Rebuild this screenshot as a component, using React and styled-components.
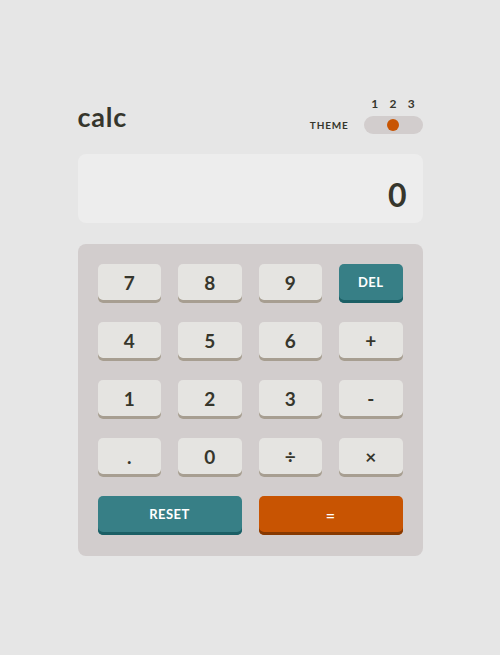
import React, { useState } from 'react';
import styled, { createGlobalStyle, css } from 'styled-components';

const GlobalStyle = createGlobalStyle`
  html, body {
    margin: 0;
    padding: 0;
    background: #e6e6e6;
    font-family: "Lato", "Open Sans", sans-serif;
  }
`;

const Page = styled.div`
  width: 500px;
  min-height: 655px;
  box-sizing: border-box;
  padding-top: 97px;
  display: flex;
  justify-content: center;
`;

const Calculator = styled.div`
  width: 345px;
`;

const Header = styled.header`
  display: flex;
  justify-content: space-between;
  align-items: flex-end;
  color: #36362c;
`;

const Title = styled.h1`
  margin: 0 0 1px;
  font-size: 27px;
  font-weight: 700;
  letter-spacing: 0.8px;
  line-height: 32px;
`;

const Theme = styled.div`
  display: flex;
  align-items: flex-end;
  gap: 15px;
`;

const ThemeLabel = styled.span`
  font-size: 10px;
  font-weight: 700;
  letter-spacing: 0.8px;
  line-height: 18px;
`;

const ToggleWrap = styled.div`
  display: flex;
  flex-direction: column;
  width: 59px;
`;

const Numbers = styled.div`
  display: grid;
  grid-template-columns: repeat(3, 1fr);
  font-size: 12px;
  font-weight: 700;
  text-align: center;
  line-height: 14px;
  margin-bottom: 5px;
  padding: 0 2px;
`;

const Track = styled.div`
  height: 18px;
  border-radius: 9px;
  background: #d2cdcd;
  display: grid;
  grid-template-columns: repeat(3, 1fr);
  align-items: center;
  padding: 0 2px;
  cursor: pointer;
`;

const Knob = styled.span`
  justify-self: center;
  width: 12px;
  height: 12px;
  border-radius: 50%;
  background: ${p => (p.active ? '#c85402' : 'transparent')};
`;

const Screen = styled.div`
  margin-top: 20px;
  height: 69px;
  border-radius: 8px;
  background: #ededed;
  display: flex;
  align-items: center;
  justify-content: flex-end;
  padding: 12px 16px 0;
  box-sizing: border-box;
  color: #36362c;
  font-size: 32px;
  font-weight: 700;
`;

const Keypad = styled.div`
  margin-top: 21px;
  background: #d2cdcd;
  border-radius: 8px;
  padding: 20px 20px 21px;
  display: grid;
  grid-template-columns: repeat(4, 1fr);
  column-gap: 17px;
  row-gap: 19px;
`;

const Key = styled.button`
  height: 39px;
  border: none;
  border-radius: 5px;
  font-family: inherit;
  font-weight: 700;
  font-size: 19px;
  color: #36362c;
  background: #e5e4e1;
  box-shadow: inset 0 -3px 0 #a79e91;
  padding: 0 0 3px;
  cursor: pointer;
  ${p =>
    p.wide &&
    css`
      grid-column: span 2;
    `}
  ${p =>
    p.variant === 'dark' &&
    css`
      background: #377f86;
      box-shadow: inset 0 -3px 0 #1b5f65;
      color: #ffffff;
      font-size: 13px;
      letter-spacing: 0.5px;
    `}
  ${p =>
    p.variant === 'accent' &&
    css`
      background: #c85402;
      box-shadow: inset 0 -3px 0 #873901;
      color: #ffffff;
      font-size: 16px;
    `}
`;

const keys = [
  { label: '7' }, { label: '8' }, { label: '9' }, { label: 'DEL', variant: 'dark' },
  { label: '4' }, { label: '5' }, { label: '6' }, { label: '+' },
  { label: '1' }, { label: '2' }, { label: '3' }, { label: '-' },
  { label: '.' }, { label: '0' }, { label: '÷' }, { label: '×' },
  { label: 'RESET', variant: 'dark', wide: true },
  { label: '=', variant: 'accent', wide: true },
];

export default function App() {
  const [theme, setTheme] = useState(1);
  return (
    <>
      <GlobalStyle />
      <Page>
        <Calculator>
          <Header>
            <Title>calc</Title>
            <Theme>
              <ThemeLabel>THEME</ThemeLabel>
              <ToggleWrap>
                <Numbers>
                  <span>1</span>
                  <span>2</span>
                  <span>3</span>
                </Numbers>
                <Track onClick={() => setTheme((theme + 1) % 3)}>
                  {[0, 1, 2].map(i => (
                    <Knob key={i} active={i === theme} />
                  ))}
                </Track>
              </ToggleWrap>
            </Theme>
          </Header>
          <Screen>0</Screen>
          <Keypad>
            {keys.map(k => (
              <Key key={k.label} variant={k.variant} wide={k.wide}>
                {k.label}
              </Key>
            ))}
          </Keypad>
        </Calculator>
      </Page>
    </>
  );
}
